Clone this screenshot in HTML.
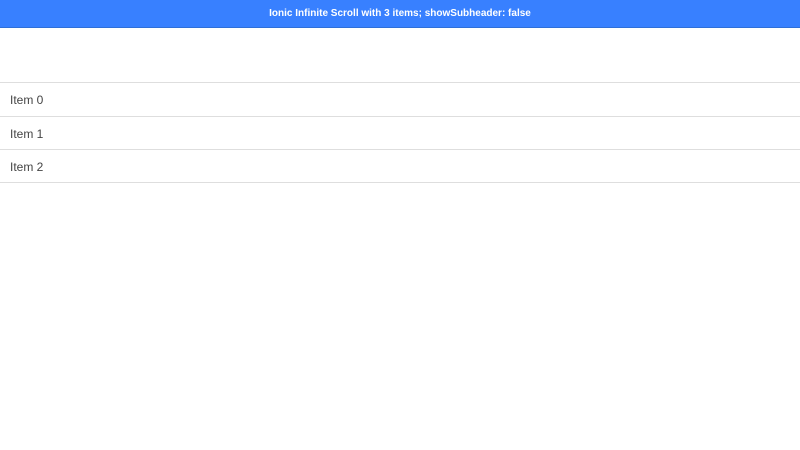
<!DOCTYPE html>
<html><head><style>
body{margin:0;width:800px;height:450px;background:#fff;font-family:"Liberation Sans",sans-serif;overflow:hidden}
.h{height:27px;background:#3880ff;border-bottom:1px solid #2f6fd8;color:#fff;font-size:10px;font-weight:bold;text-align:center;line-height:27px}
.sp{height:54px;border-bottom:1px solid #dedede}
.i{height:32px;border-bottom:1px solid #dedede;line-height:34px;padding-left:10px;font-size:12px;color:#444}
</style></head><body>
<div class="h">Ionic Infinite Scroll with 3 items; showSubheader: false</div>
<div class="sp"></div>
<div class="i" style="height:33px">Item 0</div>
<div class="i">Item 1</div>
<div class="i">Item 2</div>
</body></html>
